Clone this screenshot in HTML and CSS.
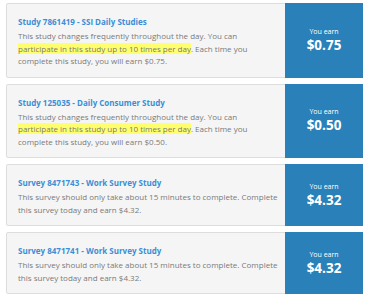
FILE: index.html
```html
<!DOCTYPE html>
<html lang="en">
<head>
    <meta charset="UTF-8">
    <meta name="viewport" content="width=device-width, initial-scale=1.0">
    <title>Available Studies</title>
    <link rel="stylesheet" href="styles.css">
</head>
<body>
    <div class="list">
        <div class="card">
            <div class="card-body">
                <a class="card-title" href="#">Study 7861419 - SSI Daily Studies</a>
                <p class="card-text">This study changes frequently throughout the day. You can <span class="mark">participate in this study up to 10 times per day</span>. Each time you complete this study, you will earn $0.75.</p>
            </div>
            <div class="earn">
                <span class="earn-label">You earn</span>
                <span class="earn-amount">$0.75</span>
            </div>
        </div>

        <div class="card">
            <div class="card-body">
                <a class="card-title" href="#">Study 125035 - Daily Consumer Study</a>
                <p class="card-text">This study changes frequently throughout the day. You can <span class="mark">participate in this study up to 10 times per day</span>. Each time you complete this study, you will earn $0.50.</p>
            </div>
            <div class="earn">
                <span class="earn-label">You earn</span>
                <span class="earn-amount">$0.50</span>
            </div>
        </div>

        <div class="card">
            <div class="card-body">
                <a class="card-title" href="#">Survey 8471743 - Work Survey Study</a>
                <p class="card-text">This survey should only take about 15 minutes to complete. Complete this survey today and earn $4.32.</p>
            </div>
            <div class="earn">
                <span class="earn-label">You earn</span>
                <span class="earn-amount">$4.32</span>
            </div>
        </div>

        <div class="card">
            <div class="card-body">
                <a class="card-title" href="#">Survey 8471741 - Work Survey Study</a>
                <p class="card-text">This survey should only take about 15 minutes to complete. Complete this survey today and earn $4.32.</p>
            </div>
            <div class="earn">
                <span class="earn-label">You earn</span>
                <span class="earn-amount">$4.32</span>
            </div>
        </div>
    </div>
</body>
</html>
```

FILE: styles.css
```css
body {
    margin: 0;
    font-family: "Open Sans", Arial, sans-serif;
    background: white;
    color: #7a7a7a;
}

.list {
    padding: 3px 7px 0 6px;
    display: flex;
    flex-direction: column;
    gap: 6px;
}

.card {
    display: flex;
    background: #f5f5f5;
    border: 1px solid #ddd;
    border-radius: 2px;
}

.card-body {
    flex: 1;
    padding: 12px 6px 9px 11px;
    display: flex;
    flex-direction: column;
    justify-content: center;
}

.card-title {
    color: #3a8fd6;
    font-size: 8px;
    font-weight: bold;
    line-height: 12.5px;
    text-decoration: none;
    margin-bottom: 1.5px;
}

.card-text {
    margin: 0;
    font-size: 8px;
    line-height: 12.5px;
}

.mark {
    background: #ffff6e;
}

.earn {
    width: 78px;
    margin: -1px -1px -1px 0;
    background: #2a80b9;
    color: white;
    display: flex;
    flex-direction: column;
    justify-content: center;
    align-items: center;
}

.earn-label {
    font-size: 7px;
    line-height: 10px;
}

.earn-amount {
    font-size: 13.5px;
    font-weight: bold;
    line-height: 17px;
}
```
